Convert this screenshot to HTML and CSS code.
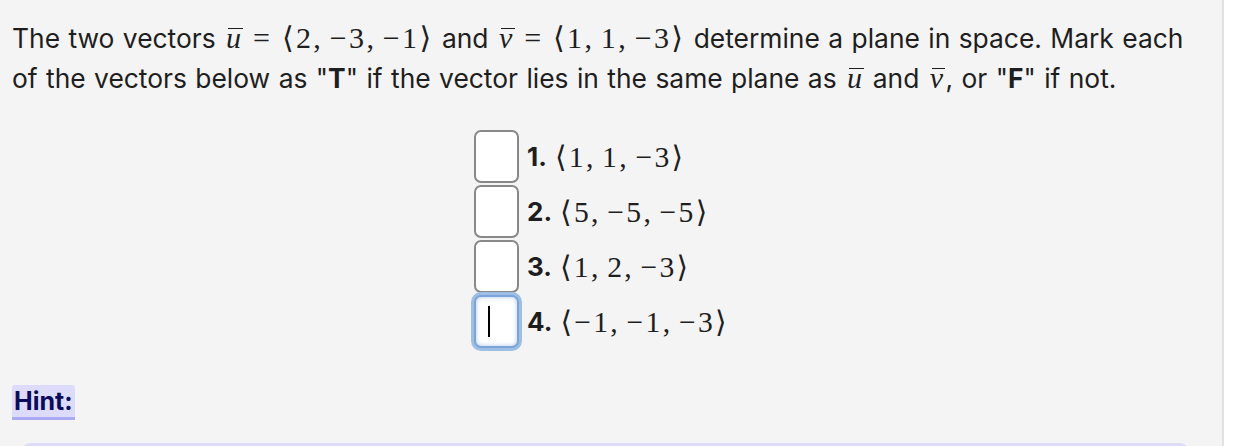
FILE: index.html
```html
<!DOCTYPE html>
<html>
  <head>
    <meta charset="UTF-8" />
    <title>Vectors in a plane</title>
    <link rel="stylesheet" href="styles.css">
  </head>
  <body>
    <div class="page">
      <div class="problem">
        <p class="prompt">
          The two vectors <span class="m"><span class="bar"><i>u</i></span><span class="rel">=</span>⟨2,<span class="sp"></span>−3,<span class="sp"></span>−1⟩</span>
          and <span class="m"><span class="bar"><i>v</i></span><span class="rel">=</span>⟨1,<span class="sp"></span>1,<span class="sp"></span>−3⟩</span>
          determine a plane in space. Mark each of the vectors below as "<b>T</b>" if the vector lies in the same
          plane as <span class="m"><span class="bar"><i>u</i></span></span> and <span class="m"><span class="bar"><i>v</i></span></span>, or "<b>F</b>" if not.
        </p>

        <!-- answer boxes -->
        <div class="choices">
          <div class="choice">
            <div class="box"></div>
            <span class="num">1.</span>
            <span class="m">⟨1,<span class="sp"></span>1,<span class="sp"></span>−3⟩</span>
          </div>
          <div class="choice">
            <div class="box"></div>
            <span class="num">2.</span>
            <span class="m">⟨5,<span class="sp"></span>−5,<span class="sp"></span>−5⟩</span>
          </div>
          <div class="choice">
            <div class="box"></div>
            <span class="num">3.</span>
            <span class="m">⟨1,<span class="sp"></span>2,<span class="sp"></span>−3⟩</span>
          </div>
          <div class="choice">
            <div class="box focused"><span class="caret"></span></div>
            <span class="num">4.</span>
            <span class="m">⟨−1,<span class="sp"></span>−1,<span class="sp"></span>−3⟩</span>
          </div>
        </div>

        <div class="hint">
          <span class="hint-label">Hint:</span>
          <div class="hint-body"></div>
        </div>
      </div>
      <div class="side"></div>
    </div>
  </body>
</html>
```

FILE: styles.css
```css
body {
  margin: 0;
  font-family: Inter, "Noto Sans", sans-serif;
  color: #1e1e1e;
  overflow: hidden;
}

.page {
  display: flex;
  height: 446px;
  overflow: hidden;
}

.problem {
  width: 1224px;
  background-color: #f4f4f4;
  border-right: 2px solid #e2e2e2;
  padding: 18px 0 0 12px;
  box-sizing: border-box;
  overflow: hidden;
}

.side {
  flex: 1;
  background-color: #fff;
}

/* question text */
.prompt {
  margin: 0;
  font-size: 26.4px;
  line-height: 40px;
  word-spacing: 1px;
  padding-right: 18px;
}

.m {
  font-family: "Liberation Serif", "DejaVu Serif", serif;
  font-size: 1.14em;
  white-space: nowrap;
  letter-spacing: 2.3px;
  word-spacing: 0;
}

.rel {
  margin: 0 0.32em;
}

.sp {
  display: inline-block;
  width: 0.22em;
}

.bar {
  position: relative;
  margin-left: 2px;
}

.bar::before {
  content: "";
  position: absolute;
  left: 2px;
  right: 0;
  top: 0.22em;
  border-top: 1.5px solid #1e1e1e;
}

/* answer boxes */
.choices {
  margin: 32px 0 0 462px;
  display: flex;
  flex-direction: column;
  gap: 2px;
  font-size: 26px;
}

.choice {
  display: flex;
  align-items: center;
  height: 53px;
}

.box {
  width: 45px;
  height: 53px;
  box-sizing: border-box;
  border: 2px solid #888;
  border-radius: 7px;
  background-color: #fff;
  display: flex;
  align-items: center;
  padding-left: 12px;
}

.box.focused {
  border-color: #7aa5d6;
  box-shadow: 0 0 0 3px #9dbfe5, inset 0 0 4px rgba(90, 140, 210, 0.5);
}

.caret {
  width: 2px;
  height: 31px;
  background-color: #000;
}

.num {
  font-weight: 700;
  margin-left: 8px;
  margin-right: 8px;
}

/* hint */
.hint {
  margin-top: 37px;
}

.hint-label {
  display: inline-block;
  font-weight: 700;
  font-size: 25px;
  line-height: 32px;
  color: #0b0b5c;
  background-color: #dcdcfa;
  border-bottom: 3px solid #aaaaf5;
  border-radius: 3px 3px 0 0;
  padding: 0 2px;
}

.hint-body {
  margin: 23px 34px 0 10px;
  height: 20px;
  background-color: #dcdcfa;
  border-radius: 8px 8px 0 0;
}
```
